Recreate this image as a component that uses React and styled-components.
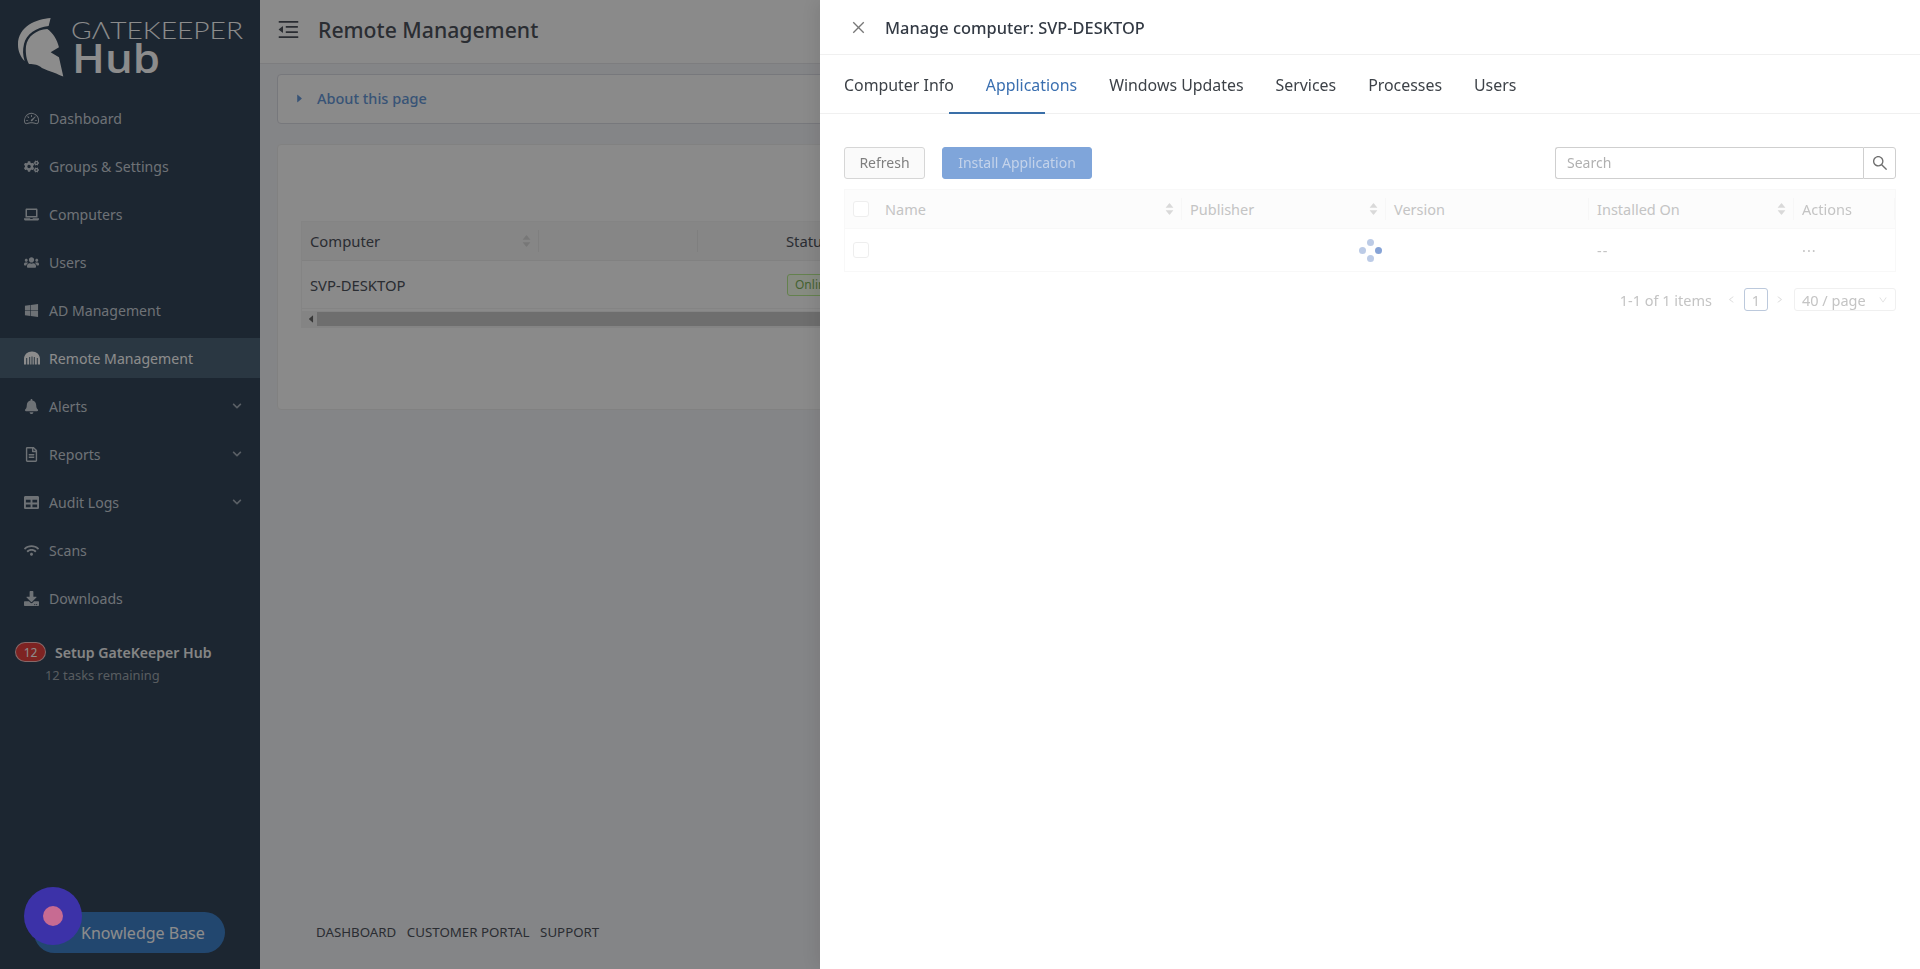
import React from 'react';
import styled, { createGlobalStyle } from 'styled-components';
import {
  AiOutlineClose,
  AiOutlineDown,
  AiOutlineLeft,
  AiOutlineMenuFold,
  AiOutlineRight,
  AiOutlineSearch,
  AiFillCaretUp,
  AiFillCaretDown,
  AiFillCaretLeft,
  AiFillCaretRight,
} from 'react-icons/ai';
import { BsSpeedometer2 } from 'react-icons/bs';
import {
  FaBell,
  FaChevronDown,
  FaCogs,
  FaDownload,
  FaLaptop,
  FaRegFileAlt,
  FaTable,
  FaUsers,
  FaWifi,
  FaWindows,
} from 'react-icons/fa';

const RemoteIcon = () => (
  <svg width="16" height="16" viewBox="0 0 16 16" fill="currentColor">
    <path d="M0 14.5 V9 C0 4.5 3.5 1.5 8 1.5 C12.5 1.5 16 4.5 16 9 V14.5 H13.8 V8 H12.8 V14.5 H10.8 V7 H9.8 V14.5 H8.5 V6.5 H7.5 V14.5 H6.2 V7 H5.2 V14.5 H3.2 V8 H2.2 V14.5 Z" />
  </svg>
);

const LogoMark = () => (
  <svg width="240" height="88" viewBox="0 -8 240 88" fill="currentColor">
    <g transform="scale(0.333)">
      <path d="M98 0 C55 3 0 25 0 80 C0 100 8 115 20 130 C14 110 14 95 18 78 C25 48 55 28 92 24 Z" />
      <path d="M88 33 C55 35 28 55 24 85 C22 105 25 125 33 138 C50 138 60 140 72 150 C95 160 120 168 136 176 L123 118 L98 103 L123 88 C118 65 105 45 88 33 Z" />
    </g>
    <LogoWord x="53" y="21" textLength="172" lengthAdjust="spacingAndGlyphs">
      GΛTEKEEPER
    </LogoWord>
    <LogoHub x="54" y="55" textLength="88" lengthAdjust="spacingAndGlyphs">
      Hub
    </LogoHub>
  </svg>
);

const menu = [
  { label: 'Dashboard', icon: <BsSpeedometer2 /> },
  { label: 'Groups & Settings', icon: <FaCogs /> },
  { label: 'Computers', icon: <FaLaptop /> },
  { label: 'Users', icon: <FaUsers /> },
  { label: 'AD Management', icon: <FaWindows /> },
  { label: 'Remote Management', icon: <RemoteIcon />, active: true },
  { label: 'Alerts', icon: <FaBell />, sub: true },
  { label: 'Reports', icon: <FaRegFileAlt />, sub: true },
  { label: 'Audit Logs', icon: <FaTable />, sub: true },
  { label: 'Scans', icon: <FaWifi /> },
  { label: 'Downloads', icon: <FaDownload /> },
];

const tabs = ['Computer Info', 'Applications', 'Windows Updates', 'Services', 'Processes', 'Users'];

const appColumns = [
  { label: 'Name', sort: true },
  { label: 'Publisher', sort: true },
  { label: 'Version' },
  { label: 'Installed On', sort: true },
  { label: 'Actions' },
];

const Sorter = () => (
  <SortIcon>
    <AiFillCaretUp />
    <AiFillCaretDown />
  </SortIcon>
);

const App = () => {
  return (
    <>
      <GlobalStyle />
      <Shell>
        <Sidebar>
          <Logo>
            <LogoMark />
          </Logo>
          <Nav>
            {menu.map((item) => (
              <NavItem key={item.label} $active={item.active}>
                <NavIcon>{item.icon}</NavIcon>
                <span>{item.label}</span>
                {item.sub && (
                  <NavArrow>
                    <FaChevronDown />
                  </NavArrow>
                )}
              </NavItem>
            ))}
          </Nav>
          <Setup>
            <SetupRow>
              <SetupBadge>12</SetupBadge>
              <SetupTitle>Setup GateKeeper Hub</SetupTitle>
            </SetupRow>
            <SetupNote>12 tasks remaining</SetupNote>
          </Setup>
          <KnowledgePill>Knowledge Base</KnowledgePill>
        </Sidebar>

        <Main>
          <TopBar>
            <AiOutlineMenuFold />
            <PageTitle>Remote Management</PageTitle>
          </TopBar>
          <Content>
            <AboutCard>
              <AiFillCaretRight />
              <AboutText>About this page</AboutText>
            </AboutCard>
            <TableCard>
              <BackTable>
                <BackHead>
                  <BackCol>
                    Computer
                    <Sorter />
                  </BackCol>
                  <BackCol />
                  <BackCol $status>Status</BackCol>
                </BackHead>
                <BackRow>
                  <BackCell>SVP-DESKTOP</BackCell>
                  <BackCell />
                  <BackCell $status>
                    <OnlineTag>Online</OnlineTag>
                  </BackCell>
                </BackRow>
                <ScrollTrack>
                  <AiFillCaretLeft />
                  <ScrollThumb />
                </ScrollTrack>
              </BackTable>
            </TableCard>
          </Content>
          <Footer>
            <FooterLink>DASHBOARD</FooterLink>
            <FooterLink>CUSTOMER PORTAL</FooterLink>
            <FooterLink>SUPPORT</FooterLink>
          </Footer>
        </Main>
      </Shell>

      <Overlay />
      <ChatBubble>
        <ChatDot />
      </ChatBubble>

      <Drawer>
        <DrawerHeader>
          <AiOutlineClose />
          <DrawerTitle>Manage computer: SVP-DESKTOP</DrawerTitle>
        </DrawerHeader>
        <TabBar>
          {tabs.map((tab) => (
            <Tab key={tab} $active={tab === 'Applications'}>
              {tab}
            </Tab>
          ))}
          <TabInk />
        </TabBar>
        <DrawerBody>
          <Toolbar>
            <RefreshButton>Refresh</RefreshButton>
            <InstallButton>Install Application</InstallButton>
            <SearchBox>
              <SearchInput placeholder="Search" />
              <SearchButton>
                <AiOutlineSearch />
              </SearchButton>
            </SearchBox>
          </Toolbar>
          <AppTable>
            <AppHead>
              <CheckCell>
                <Check />
              </CheckCell>
              {appColumns.map((col) => (
                <HeadCell key={col.label}>
                  {col.label}
                  {col.sort && <Sorter />}
                </HeadCell>
              ))}
            </AppHead>
            <AppRow>
              <CheckCell>
                <Check />
              </CheckCell>
              <RowCell />
              <RowCell />
              <RowCell />
              <RowCell>--</RowCell>
              <RowCell>···</RowCell>
            </AppRow>
            <Spinner>
              <SpinDot $area="t" />
              <SpinDot $area="l" />
              <SpinDot $area="r" $strong />
              <SpinDot $area="b" />
            </Spinner>
          </AppTable>
          <Pagination>
            <span>1-1 of 1 items</span>
            <PageArrow $left>
              <AiOutlineLeft />
            </PageArrow>
            <PageBox>1</PageBox>
            <PageArrow>
              <AiOutlineRight />
            </PageArrow>
            <PageSize>
              40 / page
              <AiOutlineDown />
            </PageSize>
          </Pagination>
        </DrawerBody>
      </Drawer>
    </>
  );
};

export default App;

const font = `'Noto Sans', 'Open Sans', sans-serif`;

const GlobalStyle = createGlobalStyle`
  html, body {
    margin: 0;
    height: 100%;
    overflow: hidden;
  }
  body {
    font-family: ${font};
    font-size: 15px;
    color: #4e525c;
    background: #f1f2f6;
  }
  * {
    box-sizing: border-box;
  }
`;

const Shell = styled.div`
  display: flex;
  height: 100vh;
`;

const Sidebar = styled.aside`
  width: 260px;
  flex: none;
  display: flex;
  flex-direction: column;
  background: #334559;
  color: #c9d0d8;
`;

const Logo = styled.div`
  height: 98px;
  padding: 10px 0 0 18px;
  color: #fff;
`;

const LogoWord = styled.text`
  font-family: 'Lato', sans-serif;
  font-size: 24px;
  font-weight: 300;
`;

const LogoHub = styled.text`
  font-family: 'Open Sans', sans-serif;
  font-size: 40px;
  font-weight: 600;
`;

const Nav = styled.nav`
  display: flex;
  flex-direction: column;
  gap: 8px;
`;

const NavItem = styled.div`
  height: 40px;
  flex: none;
  display: flex;
  align-items: center;
  padding-left: 24px;
  font-size: 14.1px;
  background: ${(p) => (p.$active ? '#4d6478' : 'transparent')};
  color: ${(p) => (p.$active ? '#fff' : 'inherit')};
`;

const NavIcon = styled.span`
  width: 25px;
  flex: none;
  display: flex;
  align-items: center;
  font-size: 15px;
`;

const NavArrow = styled.span`
  margin-left: auto;
  margin-right: 18px;
  display: flex;
  font-size: 10px;
  opacity: 0.75;
`;

const Setup = styled.div`
  margin-top: 24px;
  padding-left: 15px;
`;

const SetupRow = styled.div`
  display: flex;
  align-items: center;
  gap: 9px;
`;

const SetupBadge = styled.span`
  width: 31px;
  height: 20px;
  border-radius: 10px;
  border: 1px solid #ffffffaa;
  background: #e5403f;
  color: #fff;
  font-size: 12px;
  display: flex;
  align-items: center;
  justify-content: center;
`;

const SetupTitle = styled.span`
  font-size: 14.1px;
  font-weight: 600;
  color: #f2f2f2;
`;

const SetupNote = styled.div`
  margin: 4px 0 0 30px;
  font-size: 12.9px;
  color: #a0a8b0;
`;

const KnowledgePill = styled.div`
  margin: auto 0 16px 34px;
  width: 191px;
  height: 41px;
  flex: none;
  padding-left: 47px;
  border-radius: 21px;
  background: #3f82cb;
  color: #fff;
  font-size: 16px;
  display: flex;
  align-items: center;
`;

const Main = styled.main`
  flex: 1;
  min-width: 0;
  display: flex;
  flex-direction: column;
`;

const TopBar = styled.header`
  height: 64px;
  flex: none;
  padding: 0 0 5px 16px;
  display: flex;
  align-items: center;
  gap: 17px;
  background: #fbfbfb;
  border-bottom: 1px solid #e4e4e8;
  svg {
    font-size: 25px;
    color: #4e525c;
  }
`;

const PageTitle = styled.h1`
  margin: 0;
  font-size: 21.2px;
  font-weight: 500;
  color: #4e525c;
`;

const Content = styled.div`
  padding: 10px 17px 0;
  display: flex;
  flex-direction: column;
  gap: 20px;
`;

const AboutCard = styled.div`
  height: 50px;
  padding: 0 0 2px 16px;
  display: flex;
  align-items: center;
  gap: 12px;
  background: #fbfbfb;
  border: 1px solid #d9dae2;
  border-radius: 4px;
  svg {
    font-size: 11px;
    color: #6698d8;
  }
`;

const AboutText = styled.span`
  color: #6698d8;
  font-size: 14.5px;
  font-weight: 500;
`;

const TableCard = styled.section`
  height: 266px;
  padding: 76px 23px 0;
  background: #fbfbfb;
  border: 1px solid #ececec;
  border-radius: 4px;
`;

const BackTable = styled.div`
  border: 1px solid #f0f0f0;
  font-size: 14.8px;
`;

const backGrid = `
  display: grid;
  grid-template-columns: 237px 159px 1fr;
`;

const BackHead = styled.div`
  ${backGrid}
  height: 39px;
  background: #f4f4f4;
  border-bottom: 1px solid #ececec;
`;

const BackCol = styled.div`
  display: flex;
  align-items: center;
  justify-content: space-between;
  padding: 0 8px;
  padding-left: ${(p) => (p.$status ? '88px' : '8px')};
  border-right: ${(p) => (p.$status ? 'none' : '1px solid #e8e8e8')};
  margin: 8px 0;
`;

const BackRow = styled.div`
  ${backGrid}
  height: 48px;
  background: #fbfbfb;
  border-bottom: 1px solid #f0f0f0;
`;

const BackCell = styled.div`
  display: flex;
  align-items: center;
  padding-left: ${(p) => (p.$status ? '89px' : '8px')};
`;

const OnlineTag = styled.span`
  height: 22px;
  padding: 0 7px;
  display: flex;
  align-items: center;
  font-size: 12px;
  color: #7db35a;
  background: #f6ffed;
  border: 1px solid #b7eb8f;
  border-radius: 3px;
`;

const ScrollTrack = styled.div`
  height: 16px;
  margin-top: 2px;
  display: flex;
  align-items: center;
  gap: 1px;
  padding-left: 4px;
  background: #f1f1f1;
  font-size: 10px;
  color: #666;
`;

const ScrollThumb = styled.div`
  flex: 1;
  height: 14px;
  background: #c8c8c8;
`;

const Footer = styled.footer`
  margin-top: auto;
  padding: 0 0 28px 56px;
  display: flex;
  gap: 10.5px;
`;

const FooterLink = styled.span`
  font-size: 13.3px;
  color: #4e525c;
`;

const Overlay = styled.div`
  position: fixed;
  inset: 0;
  background: rgba(0, 0, 0, 0.45);
`;

const ChatBubble = styled.div`
  position: fixed;
  left: 24px;
  top: 887px;
  width: 58px;
  height: 58px;
  border-radius: 50%;
  background: #3c32a8;
  display: flex;
  align-items: center;
  justify-content: center;
`;

const ChatDot = styled.span`
  width: 20px;
  height: 20px;
  border-radius: 50%;
  background: #c76b92;
`;

const Drawer = styled.aside`
  position: fixed;
  top: 0;
  right: 0;
  bottom: 0;
  width: 1100px;
  display: flex;
  flex-direction: column;
  background: #fff;
  box-shadow: -6px 0 16px rgba(0, 0, 0, 0.08);
`;

const DrawerHeader = styled.div`
  height: 55px;
  flex: none;
  padding-left: 30px;
  display: flex;
  align-items: center;
  gap: 18px;
  border-bottom: 1px solid #f0f0f0;
  svg {
    font-size: 17px;
    color: #777;
  }
`;

const DrawerTitle = styled.h2`
  margin: 0;
  font-size: 16.4px;
  font-weight: 500;
  color: #333a44;
`;

const TabBar = styled.div`
  position: relative;
  height: 59px;
  flex: none;
  padding: 2px 24px 0;
  display: flex;
  align-items: center;
  gap: 32px;
  border-bottom: 1px solid #f0f0f0;
`;

const Tab = styled.span`
  font-size: 15.9px;
  color: ${(p) => (p.$active ? '#3a6fb0' : '#3d4248')};
`;

const TabInk = styled.span`
  position: absolute;
  left: 129px;
  bottom: -1px;
  width: 96px;
  height: 2px;
  background: #3a6fa8;
`;

const DrawerBody = styled.div`
  padding: 33px 24px 0;
`;

const Toolbar = styled.div`
  height: 32px;
  display: flex;
  align-items: stretch;
`;

const RefreshButton = styled.button`
  width: 81px;
  padding: 0 0 2px;
  font: inherit;
  font-size: 14px;
  color: #7f7f7f;
  background: #fafafa;
  border: 1px solid #d6d6d6;
  border-radius: 3px;
`;

const InstallButton = styled.button`
  width: 150px;
  margin-left: 17px;
  padding: 0 0 2px;
  font: inherit;
  font-size: 14px;
  color: #c4d3ea;
  background: #7fa5da;
  border: 1px solid #7fa5da;
  border-radius: 3px;
`;

const SearchBox = styled.div`
  margin-left: auto;
  width: 341px;
  display: flex;
`;

const SearchInput = styled.input`
  flex: 1;
  min-width: 0;
  padding: 0 11px 2px;
  font: inherit;
  font-size: 14px;
  border: 1px solid #cfcfcf;
  border-right: none;
  border-radius: 3px 0 0 3px;
  outline: none;
  &::placeholder {
    color: #b0b0b0;
  }
`;

const SearchButton = styled.div`
  width: 33px;
  display: flex;
  align-items: center;
  justify-content: center;
  border: 1px solid #cfcfcf;
  border-radius: 0 3px 3px 0;
  font-size: 18px;
  color: #6f6f6f;
`;

const AppTable = styled.div`
  position: relative;
  margin-top: 10px;
  border: 1px solid #f8f8f8;
  color: #c4c4c4;
  font-size: 14.5px;
`;

const appGrid = `
  display: grid;
  grid-template-columns: 32px 305px 204px 203px 205px 1fr;
`;

const AppHead = styled.div`
  ${appGrid}
  height: 39px;
  background: #fcfcfc;
  border-bottom: 1px solid #f8f8f8;
`;

const AppRow = styled.div`
  ${appGrid}
  height: 42px;
`;

const CheckCell = styled.div`
  display: flex;
  align-items: center;
  padding-left: 8px;
`;

const Check = styled.span`
  width: 16px;
  height: 16px;
  border: 1px solid #eeeeee;
  border-radius: 3px;
  background: #fff;
`;

const HeadCell = styled.div`
  display: flex;
  align-items: center;
  justify-content: space-between;
  padding: 0 8px;
  margin: 8px 0;
  border-right: 1px solid #f7f7f7;
`;

const RowCell = styled.div`
  display: flex;
  align-items: center;
  padding: 0 8px;
  letter-spacing: 1px;
`;

const SortIcon = styled.span`
  display: flex;
  flex-direction: column;
  font-size: 11px;
  line-height: 0;
  margin-right: -1.5px;
  color: #d9d9d9;
  svg {
    margin: -2px 0;
  }
`;

const Spinner = styled.div`
  position: absolute;
  left: 513px;
  top: 48px;
  width: 24px;
  height: 24px;
  display: grid;
  grid-template: repeat(3, 8px) / repeat(3, 8px);
  grid-template-areas:
    '. t .'
    'l . r'
    '. b .';
  place-items: center;
`;

const SpinDot = styled.span`
  grid-area: ${(p) => p.$area};
  width: 7px;
  height: 7px;
  border-radius: 50%;
  background: ${(p) => (p.$strong ? '#86a3d6' : '#bccbe6')};
`;

const Pagination = styled.div`
  margin-top: 16px;
  display: flex;
  justify-content: flex-end;
  align-items: center;
  color: #c4c4c4;
  font-size: 14.5px;
`;

const PageArrow = styled.span`
  display: flex;
  font-size: 9px;
  color: #d8d8d8;
  margin: ${(p) => (p.$left ? '0 8px 0 15px' : '0 10px 0 7px')};
`;

const PageBox = styled.span`
  width: 24px;
  height: 23px;
  display: flex;
  align-items: center;
  justify-content: center;
  border: 1px solid #bcc9dc;
  border-radius: 3px;
`;

const PageSize = styled.span`
  width: 102px;
  height: 23px;
  padding: 0 7px;
  display: flex;
  align-items: center;
  justify-content: space-between;
  border: 1px solid #f0f0f0;
  border-radius: 3px;
  svg {
    font-size: 10px;
    color: #dddddd;
  }
`;
